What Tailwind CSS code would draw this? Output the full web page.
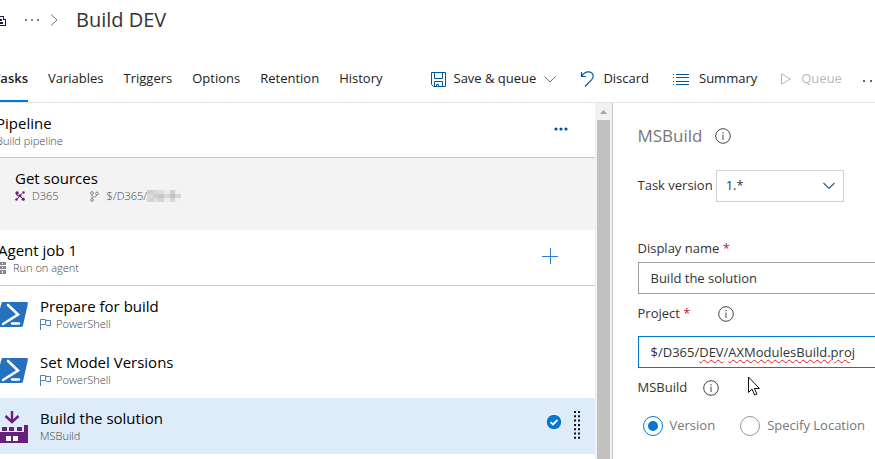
<!DOCTYPE html>
<html lang="en">
<head>
  <meta charset="UTF-8" />
  <meta name="viewport" content="width=device-width, initial-scale=1.0"/>
  <title>Build DEV - Pipelines</title>
  <script src="https://cdn.jsdelivr.net/npm/@tailwindcss/browser@4"></script>
</head>
<body class="bg-white font-['Open_Sans','Noto_Sans',sans-serif] text-[13px] text-[#222] overflow-hidden">
  <div class="h-screen flex flex-col">

    <!-- Breadcrumb -->
    <header class="flex items-center h-10 shrink-0">
      <svg class="w-[6px] h-3 shrink-0" viewBox="0 0 6 12" fill="none" shape-rendering="crispEdges">
        <path d="M0 2h3v3h2v6H0" stroke="#1b1b3a"/>
        <path d="M0 6h2M0 9h3" stroke="#1b1b3a" stroke-width="2"/>
      </svg>
      <button class="ml-[18px]" aria-label="More">
        <svg class="w-4 h-4" viewBox="0 0 16 16" fill="#555"><circle cx="2" cy="8" r="1"/><circle cx="8" cy="8" r="1"/><circle cx="14" cy="8" r="1"/></svg>
      </button>
      <svg class="ml-[10px] w-2 h-3" viewBox="0 0 8 12" fill="none" stroke="#777"><path d="M1 .5L7 6 1 11.5"/></svg>
      <h1 class="ml-[18px] text-[20px] text-[#333]">Build DEV</h1>
    </header>

    <!-- Tabs and toolbar -->
    <div class="flex items-center h-[63px] pt-4 shrink-0 border-b border-[#e5e5e5] whitespace-nowrap">
      <nav class="flex self-stretch -ml-[7px] gap-5">
        <a href="#" class="flex items-center font-semibold border-b-2 border-[#0078d4] pt-[2px]">Tasks</a>
        <a href="#" class="flex items-center">Variables</a>
        <a href="#" class="flex items-center">Triggers</a>
        <a href="#" class="flex items-center">Options</a>
        <a href="#" class="flex items-center">Retention</a>
        <a href="#" class="flex items-center">History</a>
      </nav>
      <div class="ml-7 w-px h-6 bg-[#c8c8c8]"></div>
      <div class="flex items-center ml-5 gap-6">
        <button class="flex items-center gap-2">
          <svg class="w-[15px] h-[15px]" viewBox="0 0 15 15" fill="none" stroke="#005a9e"><path d="M.5.5h14v14h-12l-2-2z"/><path d="M3.5.5v6h8v-6M3.5 14.5v-5h8v5M5.5 14.5v-2h2v2"/></svg>
          Save &amp; queue
          <svg class="w-3 h-[7px]" viewBox="0 0 12 7" fill="none" stroke="#8a6f5c"><path d="M.5.5L6 6 11.5.5"/></svg>
        </button>
        <button class="flex items-center gap-2">
          <svg class="w-[15px] h-4" viewBox="0 0 15 16" fill="none" stroke="#005a9e" stroke-width="1.2"><path d="M1.500 1v4.500H6M1.500 5.500C3.500 2 6 .8 8.500.8c2.800 0 4.700 2 4.700 4.400 0 1.500-.7 2.600-1.700 3.700L5 15.500"/></svg>
          Discard
        </button>
        <button class="flex items-center gap-2">
          <svg class="w-4 h-[11px]" viewBox="0 0 16 11" stroke="#005a9e" shape-rendering="crispEdges"><path d="M0 .5h1M0 3.500h1M0 7.500h1M0 10.500h1M3 .5h13M3 3.500h13M3 7.500h13M3 10.500h13"/></svg>
          <span class="ml-[2px]">Summary</span>
        </button>
        <button class="flex items-center gap-[10px] text-[#b8b8b8]" disabled>
          <svg class="w-[10px] h-3" viewBox="0 0 10 12" fill="none" stroke="#b8b8b8"><path d="M.5.8L9.300 6 .5 11.200z"/></svg>
          Queue
        </button>
        <button aria-label="More actions" class="-ml-1">
          <svg class="w-4 h-4" viewBox="0 0 16 16" fill="#333"><circle cx="2" cy="10" r="1"/><circle cx="9" cy="10" r="1"/><circle cx="16" cy="10" r="1"/></svg>
        </button>
      </div>
    </div>

    <div class="flex flex-1 min-h-0">

      <!-- Pipeline tasks -->
      <section class="w-[70%] flex border-r border-[#c8c8c8]">
        <div class="flex-1 min-w-0 text-black">
          <div class="h-[55px] flex border-b border-[#c8c8c8] pt-[10px] pr-[27px]">
            <div class="flex-1 -ml-1">
              <h2 class="text-[15px] leading-5">Pipeline</h2>
              <p class="text-[11px] font-light leading-4 text-[#444]">Build pipeline</p>
            </div>
            <button aria-label="Pipeline actions" class="self-start mt-2">
              <svg class="w-[14px] h-4" viewBox="0 0 14 16" fill="#0050a0"><circle cx="2" cy="8" r="1.600"/><circle cx="7" cy="8" r="1.600"/><circle cx="12" cy="8" r="1.600"/></svg>
            </button>
          </div>

          <div class="h-[72px] bg-[#f3f3f3] pt-[10px] pl-[15px]">
            <h2 class="text-[15px] leading-5">Get sources</h2>
            <div class="flex items-center text-[11px] font-light leading-4 text-[#444]">
              <svg class="w-[10px] h-[10px]" viewBox="0 0 10 10" fill="#68217a"><path d="M2 1.500v3l3 .5 1.500-2.500M1.500 8.500L5 5l3.500 3.500" fill="none" stroke="#68217a"/><circle cx="2" cy="2" r="1.700"/><circle cx="5" cy="4.800" r="1.500"/><circle cx="8.500" cy="1.500" r="1.200"/><circle cx="1.500" cy="8.500" r="1.200"/><circle cx="8.200" cy="8.200" r="1.600"/></svg>
              <span class="ml-[7px]">D365</span>
              <svg class="ml-[31px] w-[9px] h-[11px]" viewBox="0 0 9 11" fill="none" stroke="#888"><circle cx="2" cy="2" r="1.400"/><circle cx="7" cy="2.500" r="1.400"/><circle cx="2" cy="9" r="1.400"/><path d="M2 3.500v4M7 4c0 2-4.500 1.500-4.800 3.500"/></svg>
              <span class="ml-2">$/D365/</span>
              <div class="grid grid-cols-6 w-[34px] h-3">
                <i class="bg-[#cfcfcf]"></i><i class="bg-[#d8d8dc]"></i><i class="bg-[#dedede]"></i><i class="bg-[#ececec]"></i><i class="bg-[#d4d0d0]"></i><i class="bg-[#f0f0f0]"></i>
                <i class="bg-[#dadada]"></i><i class="bg-[#cdcdd2]"></i><i class="bg-[#c8c8c8]"></i><i class="bg-[#d8d8d8]"></i><i class="bg-[#c2c2c4]"></i><i class="bg-[#d6d6d6]"></i>
                <i class="bg-[#d2d2d2]"></i><i class="bg-[#dedede]"></i><i class="bg-[#d4d4d8]"></i><i class="bg-[#ececec]"></i><i class="bg-[#d8d4d4]"></i><i class="bg-[#f0f0f0]"></i>
              </div>
            </div>
          </div>

          <div class="h-14 flex border-b border-[#c8c8c8] pt-[10px] pr-[37px]">
            <div class="flex-1 -ml-[2px]">
              <h2 class="text-[15px] leading-5">Agent job 1</h2>
              <p class="flex items-center gap-[7px] text-[11px] font-light leading-4 text-[#444]">
                <svg class="w-2 h-3" viewBox="0 0 8 12" shape-rendering="crispEdges"><path fill="#888891" d="M1 0h7v3H1zM1 4h7v3H1zM1 8h7v4H1z"/><path fill="#fff" d="M4 1h1v1H4zM4 5h1v1H4zM4 9h1v2H4z"/></svg>
                Run on agent
              </p>
            </div>
            <button aria-label="Add a task" class="self-start mt-2">
              <svg class="w-4 h-4" viewBox="0 0 16 16" stroke="#2b7cd3"><path d="M0 8.500h16M8.500 0v16"/></svg>
            </button>
          </div>

          <div class="h-14 flex pt-[10px]">
            <svg class="w-7 h-[27px] mt-[5px] shrink-0" viewBox="0 0 28 27"><path fill="#2671be" d="M2 1h24.500q1.800 0 1.400 1.700L23 24.500Q22.500 26 21 26H-2V14z"/><path d="M8 4l10 9.500L3 23" fill="none" stroke="#fff" stroke-width="2.600" stroke-linecap="round"/><path d="M12 22.500h7" stroke="#fff" stroke-width="2.400" stroke-linecap="round"/></svg>
            <div class="ml-3">
              <h3 class="text-[15px] leading-5">Prepare for build</h3>
              <p class="flex items-center gap-[5px] text-[11px] font-light leading-4 text-[#444]">
                <svg class="w-[11px] h-3" viewBox="0 0 11 12" fill="none" stroke="#4c83b5"><path d="M.5 12V1.500h5v5h-5M5.500 2.500h5v5h-4v-1"/></svg>
                PowerShell
              </p>
            </div>
          </div>

          <div class="h-14 flex pt-[10px]">
            <svg class="w-7 h-[27px] mt-[5px] shrink-0" viewBox="0 0 28 27"><path fill="#2671be" d="M2 1h24.500q1.800 0 1.400 1.700L23 24.500Q22.500 26 21 26H-2V14z"/><path d="M8 4l10 9.500L3 23" fill="none" stroke="#fff" stroke-width="2.600" stroke-linecap="round"/><path d="M12 22.500h7" stroke="#fff" stroke-width="2.400" stroke-linecap="round"/></svg>
            <div class="ml-3">
              <h3 class="text-[15px] leading-5">Set Model Versions</h3>
              <p class="flex items-center gap-[5px] text-[11px] font-light leading-4 text-[#444]">
                <svg class="w-[11px] h-3" viewBox="0 0 11 12" fill="none" stroke="#4c83b5"><path d="M.5 12V1.500h5v5h-5M5.500 2.500h5v5h-4v-1"/></svg>
                PowerShell
              </p>
            </div>
          </div>

          <div class="h-14 flex pt-[10px] pr-[14px] bg-[#deebf9]">
            <svg class="w-7 h-8 mt-[3px] shrink-0" viewBox="0 0 28 32"><path d="M12 0v11M5.500 5l6.500 6 6.500-6" fill="none" stroke="#68217a" stroke-width="2.400"/><path fill="#68217a" d="M0 21h24v-7h4v18H0z"/><path fill="#68217a" d="M2 16h5v4H2zM9 16h5v4H9zM17 16h5v4h-5z"/><path fill="#fff" d="M6 25h5v5H6zM13 25h5v5h-5z"/></svg>
            <div class="ml-3 flex-1">
              <h3 class="text-[15px] leading-5">Build the solution</h3>
              <p class="text-[11px] font-light leading-4 text-[#444]">MSBuild</p>
            </div>
            <svg class="w-4 h-4 mt-[6px]" viewBox="0 0 16 16"><circle cx="8" cy="8" r="8" fill="#fff"/><circle cx="8" cy="8" r="7.300" fill="#0078d4"/><path d="M4.500 8.200l2.500 2.300 4.500-4.500" fill="none" stroke="#fff" stroke-width="1.800"/></svg>
            <svg class="w-2 h-7 ml-[11px] mt-[3px]" viewBox="0 0 8 28" stroke="#111" stroke-width="2" stroke-dasharray="2 2.300"><path d="M2 0v28M6 0v28"/></svg>
          </div>
        </div>

        <!-- Scrollbar -->
        <div class="w-[17px] bg-[#f1f1f1] flex flex-col items-center">
          <svg class="w-[7px] h-[17px] shrink-0" viewBox="0 0 7 17"><path fill="#a3a3a3" d="M0 11l3.500-4L7 11z"/></svg>
          <div class="flex-1 w-[13px] bg-[#c1c1c1]"></div>
        </div>
      </section>

      <!-- Task settings -->
      <form class="flex-1 min-w-0 pl-[25px] pt-[21px] text-[#333]">
        <div class="flex items-center gap-3 h-6">
          <h2 class="text-[17px] text-[#777]">MSBuild</h2>
          <svg class="w-4 h-4" viewBox="0 0 16 16" fill="none" stroke="#444"><circle cx="8" cy="8" r="7.300"/><path d="M8 6.500V12M8 4v1.300"/></svg>
        </div>

        <div class="flex items-center gap-[3px] mt-[22px]">
          <label for="taskVersion">Task version</label>
          <div class="relative">
            <select id="taskVersion" class="appearance-none w-32 h-8 border border-[#d0d0d0] bg-white pl-[9px]">
              <option>1.*</option>
            </select>
            <svg class="absolute right-[9px] top-3 w-3 h-2 pointer-events-none" viewBox="0 0 12 8" fill="none" stroke="#2f5f8a" stroke-width="1.200"><path d="M.5 1L6 6.500 11.500 1"/></svg>
          </div>
        </div>

        <label for="displayName" class="block leading-5 mt-9">Display name <span class="text-[#c50f3c]">*</span></label>
        <input type="text" id="displayName" value="Build the solution" class="block w-full h-8 mt-1 border border-r-0 border-[#a0a0a0] px-3 outline-none" />

        <div class="flex items-center h-5 mt-[10px]">
          <label for="project">Project <span class="text-[#c50f3c]">*</span></label>
          <svg class="ml-7 w-4 h-4" viewBox="0 0 16 16" fill="none" stroke="#444"><circle cx="8" cy="8" r="7.300"/><path d="M8 6.500V12M8 4v1.300"/></svg>
        </div>
        <div class="relative mt-3">
          <input type="text" id="project" value="$/D365/DEV/AXModulesBuild.proj" spellcheck="false" class="block w-full h-8 border border-r-0 border-[#0078d4] px-3 outline-none" />
          <!-- spelling marks -->
          <div aria-hidden="true" class="absolute left-[13px] top-0 leading-8 text-transparent whitespace-nowrap pointer-events-none">$/D365/<span class="underline decoration-wavy decoration-[#e0202a] decoration-1 underline-offset-2">DEV</span>/<span class="underline decoration-wavy decoration-[#e0202a] decoration-1 underline-offset-2">AXModulesBuild.proj</span></div>
          <!-- mouse pointer -->
          <svg class="absolute left-[110px] top-10 w-3 h-5" viewBox="0 0 12 20" fill="#fff" stroke="#111"><path d="M.5 1v15.500l3.500-3.500 2.700 6 2.300-1-2.600-5.500h5z"/></svg>
        </div>

        <fieldset class="mt-[10px]">
          <legend class="flex items-center gap-4 h-5">MSBuild
            <svg class="w-4 h-4" viewBox="0 0 16 16" fill="none" stroke="#444"><circle cx="8" cy="8" r="7.300"/><path d="M8 6.500V12M8 4v1.300"/></svg>
          </legend>
          <div class="flex pt-[18px] ml-[5px] gap-[25px] text-[#777] whitespace-nowrap">
            <label class="flex items-center gap-[7px]">
              <input type="radio" name="location" checked class="appearance-none w-5 h-5 rounded-full border border-[#999] checked:border-[#0078d4] checked:bg-[#0078d4] checked:bg-clip-content p-1" />
              Version
            </label>
            <label class="flex items-center gap-[7px]">
              <input type="radio" name="location" class="appearance-none w-5 h-5 rounded-full border border-[#999] checked:border-[#0078d4] checked:bg-[#0078d4] checked:bg-clip-content p-1" />
              Specify Location
            </label>
          </div>
        </fieldset>
      </form>
    </div>
  </div>
</body>
</html>
